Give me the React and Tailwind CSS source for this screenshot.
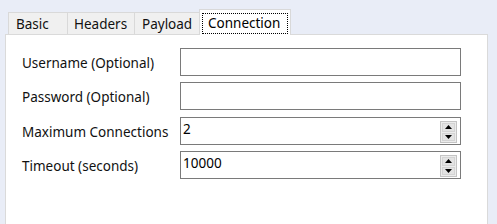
const font = { fontFamily: '"Noto Sans", "Open Sans", sans-serif' };

function Tab({ label, active, className = '' }) {
  if (active) {
    return (
      <div className={`relative z-10 -mx-[2px] -mb-px h-[26px] bg-white border border-b-0 border-[#d9d9d9] px-[2px] pt-[3px] ${className}`}>
        <div className="h-[21px] border border-dotted border-black px-[5px] flex items-center text-[13.5px] text-black">
          {label}
        </div>
      </div>
    );
  }
  return (
    <div className={`h-[22px] bg-[#f0f0f0] border border-b-0 border-[#d9d9d9] flex items-center pt-[2px] text-[13.5px] text-[#111]  ${className}`}>
      {label}
    </div>
  );
}

function TextField({ value = '' }) {
  return (
    <div className="h-[28px] w-[281px] border border-[#7a7a7a] bg-white px-[2px] pt-[1px] text-[13.5px] text-black leading-[20px]">
      {value}
    </div>
  );
}

function Arrow({ up }) {
  return (
    <svg width="7" height="4" viewBox="0 0 7 4">
      <path d={up ? 'M3.5 0 L7 4 L0 4 Z' : 'M0 0 L7 0 L3.5 4 Z'} fill="#000" />
    </svg>
  );
}

function NumberField({ value }) {
  return (
    <div className="h-[28px] w-[281px] border border-[#7a7a7a] bg-white flex pl-[2px] pr-[3px] pt-[1px]">
      <div className="flex-1 text-[13.5px] text-black leading-[20px]">{value}</div>
      <div className="mt-[2px] h-[22px] w-[17px] border border-[#c4c4c4] bg-[#ececec] flex flex-col p-px gap-px">
        <div className="flex-1 bg-[#e3e3e3] border border-[#d4d4d4] flex items-center justify-center">
          <Arrow up />
        </div>
        <div className="flex-1 bg-[#e3e3e3] border border-[#d4d4d4] flex items-center justify-center">
          <Arrow />
        </div>
      </div>
    </div>
  );
}

function Row({ label, children, className = '' }) {
  return (
    <div className={`flex items-center ${className}`}>
      <div className="w-[158px] pt-[3px] text-[13.5px] text-[#111]">{label}</div>
      {children}
    </div>
  );
}

export default function App() {
  return (
    <div className="w-[497px] h-[224px] overflow-hidden bg-[#e9edf7] pt-[9px]" style={font}>
      <div className="flex items-end pl-[8px]">
        <Tab label="Basic" className="w-[60px] pl-[7px]" />
        <Tab label="Headers" className="w-[67px] border-l-0 pl-[6px]" />
        <Tab label="Payload" className="w-[66px] border-l-0 pl-[7px]" />
        <Tab label="Connection" active className="w-[92px]" />
      </div>
      <div className="ml-[5px] w-[483px] h-[200px] bg-white border border-[#dadada] pt-[13px] pl-[16px]">
        <Row label="Username (Optional)">
          <TextField />
        </Row>
        <Row label="Password (Optional)" className="mt-[6px]">
          <TextField />
        </Row>
        <Row label="Maximum Connections" className="mt-[7px]">
          <NumberField value="2" />
        </Row>
        <Row label="Timeout (seconds)" className="mt-[6px]">
          <NumberField value="10000" />
        </Row>
      </div>
    </div>
  );
}
